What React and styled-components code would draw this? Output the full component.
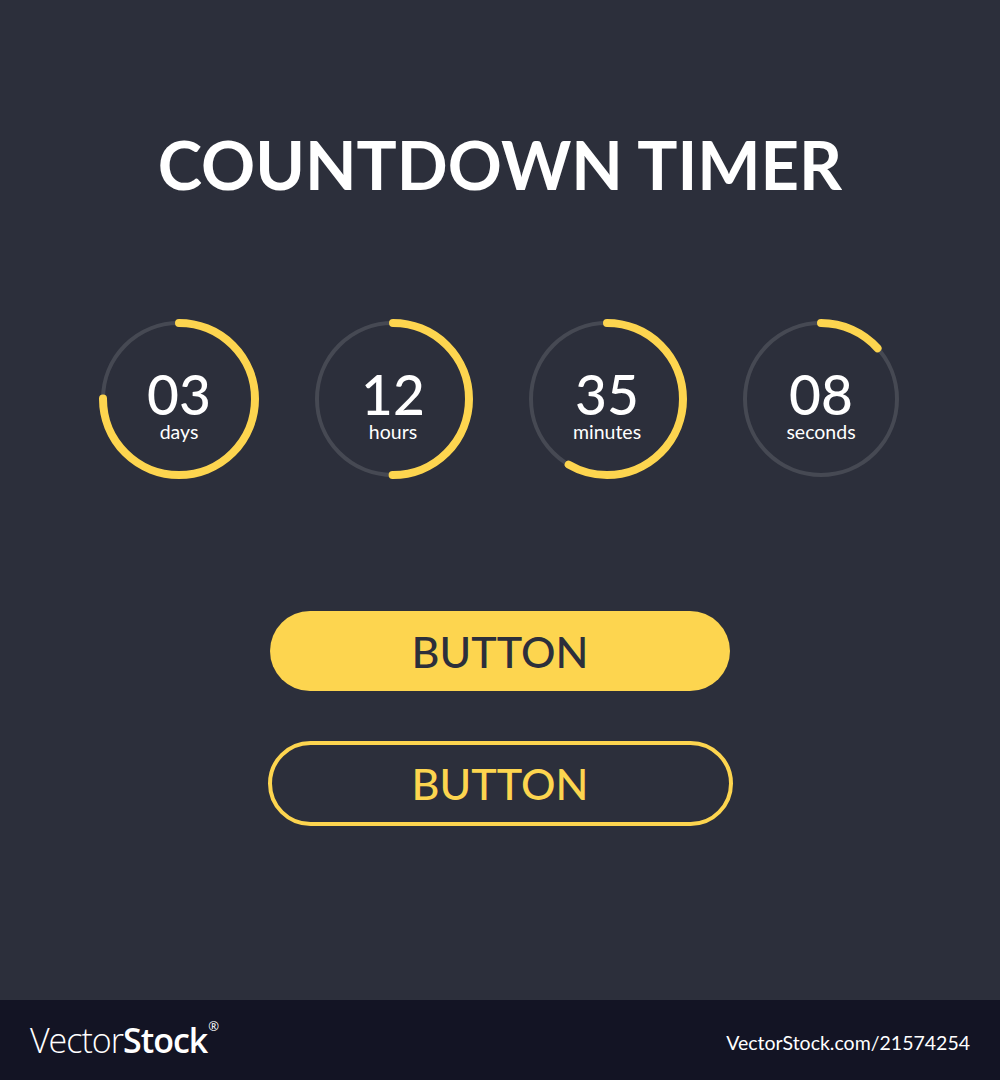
import React from "react";
import styled, { createGlobalStyle } from "styled-components";

const Global = createGlobalStyle`
  html, body { margin: 0; padding: 0; }
  body { background: #2c2f3b; font-family: Lato, "Open Sans", sans-serif; }
`;

const Page = styled.div`
  width: 1000px;
  height: 1080px;
  display: flex;
  flex-direction: column;
  background: #2c2f3b;
`;

const Main = styled.main`
  height: 1000px;
  display: flex;
  flex-direction: column;
  align-items: center;
  padding-top: 131px;
  box-sizing: border-box;
`;

const Title = styled.h1`
  margin: 0;
  font-family: Lato, sans-serif;
  font-weight: 700;
  font-size: 67px;
  line-height: 1;
  color: #ffffff;
`;

const Dials = styled.div`
  margin-top: 121px;
  display: flex;
  gap: 54px;
`;

const Dial = styled.div`
  width: 160px;
  height: 160px;
  display: grid;
  & > * { grid-area: 1 / 1; }
`;

const DialText = styled.div`
  display: flex;
  flex-direction: column;
  align-items: center;
  justify-content: center;
  padding-top: 11px;
  color: #ffffff;
`;

const Value = styled.span`
  font-size: 55px;
  line-height: 1;
  font-weight: 500;
`;

const Unit = styled.span`
  margin-top: 0;
  font-size: 19.5px;
  line-height: 1;
  font-weight: 400;
`;

const Actions = styled.div`
  margin-top: 132px;
  display: flex;
  flex-direction: column;
  align-items: center;
  gap: 50px;
`;

const Button = styled.button`
  box-sizing: border-box;
  width: ${(p) => (p.$outline ? 465 : 460)}px;
  height: ${(p) => (p.$outline ? 85 : 80)}px;
  border-radius: 45px;
  border: ${(p) => (p.$outline ? "4px solid #fdd54f" : "none")};
  background: ${(p) => (p.$outline ? "transparent" : "#fdd54f")};
  color: ${(p) => (p.$outline ? "#fdd54f" : "#2c2f3b")};
  font-family: Lato, sans-serif;
  font-size: 43px;
  font-weight: 500;
  line-height: 1;
  padding: 0;
  cursor: pointer;
`;

const Footer = styled.footer`
  height: 80px;
  background: #131424;
  display: flex;
  align-items: center;
  justify-content: space-between;
  padding: 0 30px 0 30px;
  box-sizing: border-box;
  color: #ffffff;
`;

const Brand = styled.div`
  font-family: "Open Sans", Lato, sans-serif;
  font-size: 34px;
  letter-spacing: -1px;
  display: flex;
  align-items: flex-start;
`;

const BrandLight = styled.span`
  font-weight: 300;
`;

const BrandBold = styled.span`
  font-weight: 600;
`;

const Reg = styled.sup`
  font-size: 13px;
  margin-left: 1px;
  vertical-align: top;
  line-height: 1;
  position: relative;
  top: 3px;
`;

const Ref = styled.div`
  font-family: Lato, sans-serif;
  font-size: 19.5px;
  padding-top: 4px;
`;

const R = 76;
const C = 2 * Math.PI * R;

// Grey track with a yellow progress arc starting at 12 o'clock
function Ring({ fraction }) {
  return (
    <svg width="160" height="160" viewBox="0 0 160 160">
      <circle cx="80" cy="80" r={R} fill="none" stroke="#464953" strokeWidth="4" />
      <circle
        cx="80"
        cy="80"
        r={R}
        fill="none"
        stroke="#fdd54f"
        strokeWidth="8"
        strokeLinecap="round"
        strokeDasharray={`${C * fraction} ${C}`}
        transform="rotate(-90 80 80)"
      />
    </svg>
  );
}

const units = [
  { value: "03", unit: "days", fraction: 0.75 },
  { value: "12", unit: "hours", fraction: 0.5 },
  { value: "35", unit: "minutes", fraction: 35 / 60 },
  { value: "08", unit: "seconds", fraction: 8 / 60 },
];

export default function App() {
  return (
    <>
      <Global />
      <Page>
        <Main>
          <Title>COUNTDOWN TIMER</Title>
          <Dials>
            {units.map((u) => (
              <Dial key={u.unit}>
                <Ring fraction={u.fraction} />
                <DialText>
                  <Value>{u.value}</Value>
                  <Unit>{u.unit}</Unit>
                </DialText>
              </Dial>
            ))}
          </Dials>
          <Actions>
            <Button>BUTTON</Button>
            <Button $outline>BUTTON</Button>
          </Actions>
        </Main>
        <Footer>
          <Brand>
            <BrandLight>Vector</BrandLight>
            <BrandBold>Stock</BrandBold>
            <Reg>®</Reg>
          </Brand>
          <Ref>VectorStock.com/21574254</Ref>
        </Footer>
      </Page>
    </>
  );
}
